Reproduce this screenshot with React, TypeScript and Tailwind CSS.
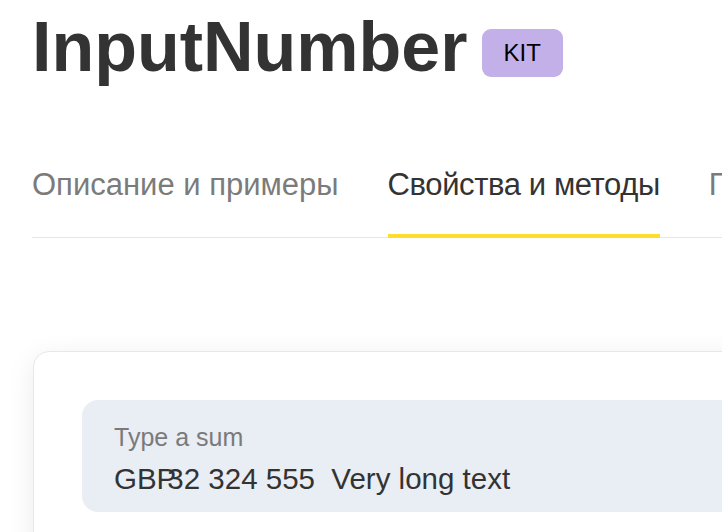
const tabs = ["Описание и примеры", "Свойства и методы", "Пример использования"];

export default function App() {
  return (
    <div className="h-[532px] w-[722px] overflow-hidden bg-white font-['Liberation_Sans',Arial,sans-serif]">
      <div className="pl-[32px]">
        <div className="flex items-start pt-[12px]">
          <h1 className="text-[70px] font-bold leading-none text-[#333333]">InputNumber</h1>
          <span className="ml-[14px] mt-[17px] flex h-[48px] items-center rounded-[9px] bg-[#c4b0e8] px-[22px] text-[24px] leading-none text-black">
            KIT
          </span>
        </div>

        <nav className="mt-[87px] flex gap-[49px] whitespace-nowrap border-b border-[#e6e6e6]">
          {tabs.map((tab, i) => (
            <div
              key={tab}
              className={
                i === 1
                  ? "-mb-px border-b-4 border-[#ffdd2d] pb-[34px] text-[31px] leading-none tracking-[-0.4px] text-[#333333]"
                  : "-mb-px border-b-4 border-transparent pb-[34px] text-[31px] leading-none text-[#7b7b7b]"
              }
            >
              {tab}
            </div>
          ))}
        </nav>

        <div className="ml-px mt-[113px] h-[300px] w-[800px] rounded-[16px] border border-[#e8e8e8] bg-white p-[48px] shadow-[0_6px_28px_rgba(0,0,0,0.08)]">
          <div className="h-[112px] rounded-[16px] bg-[#e9edf4] pl-[32px] pt-[25px]">
            <div className="text-[25px] leading-none text-[#7a7a7a]">Type a sum</div>
            <div className="mt-[14px] flex whitespace-pre text-[29.5px] leading-none text-[#333333]">
              <span>GBP</span>
              <span className="-ml-[9px]">32 324 555  Very long text</span>
            </div>
          </div>
        </div>
      </div>
    </div>
  );
}
